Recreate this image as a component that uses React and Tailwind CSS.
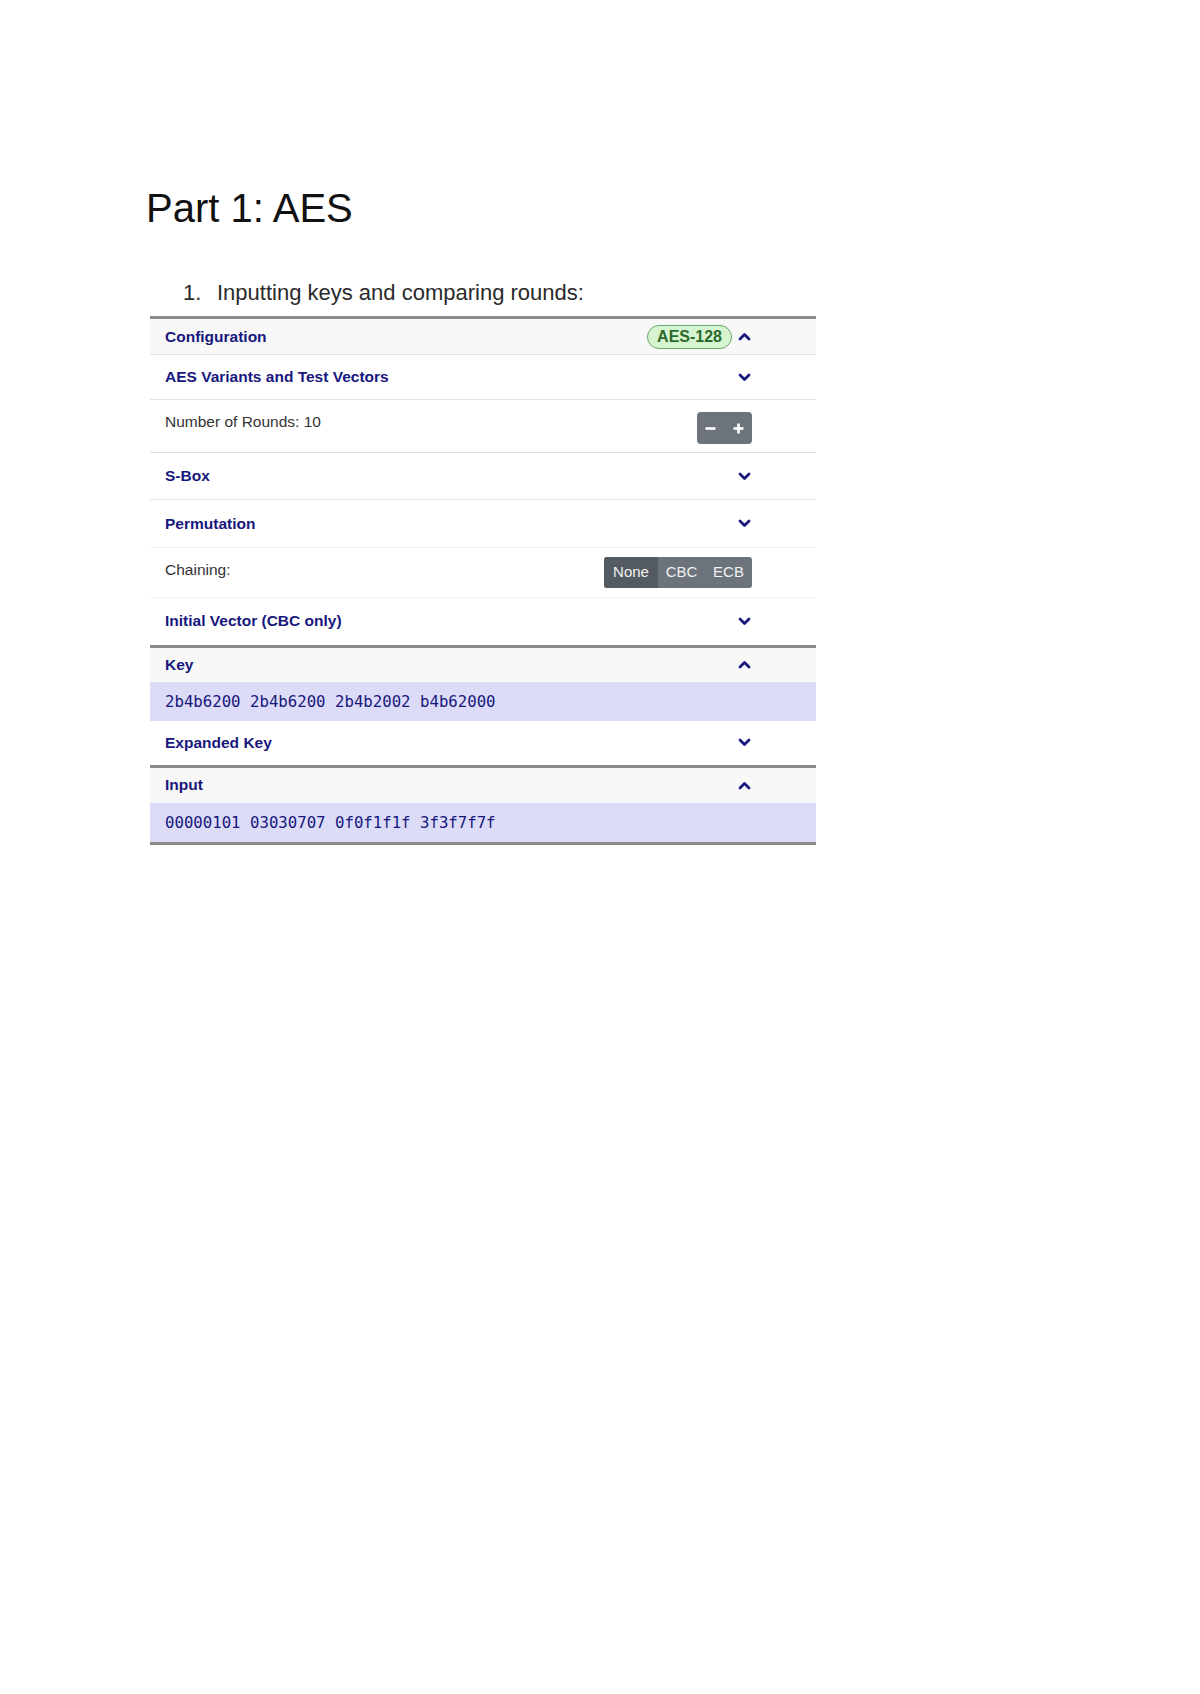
const navy = 'text-[#17177c]';

function Chevron({ up }) {
  return (
    <svg width="13" height="9" viewBox="0 0 13 9" className="shrink-0">
      <polyline
        points={up ? '2,7 6.5,2.5 11,7' : '2,2 6.5,6.5 11,2'}
        fill="none"
        stroke="#17177c"
        strokeWidth="2.8"
        strokeLinecap="round"
        strokeLinejoin="round"
      />
    </svg>
  );
}

function HeadRow({ title, h, up, shade, border = 'border-[#e4e4e4]', children }) {
  return (
    <div
      className={`flex items-center justify-between pl-[15px] pr-[65px] border-b ${border} ${h} ${shade ? 'bg-[#f8f8f8]' : 'bg-white'}`}
    >
      <span className={`font-bold text-[15.5px] leading-5 ${navy}`}>{title}</span>
      <div className="flex items-center gap-[6px]">
        {children}
        <Chevron up={up} />
      </div>
    </div>
  );
}

function ValueRow({ value }) {
  return (
    <div className="flex items-center h-[39px] pl-[15px] bg-[#dcdcf8]">
      <span
        className={`text-[15.7px] leading-5 ${navy}`}
        style={{ fontFamily: '"DejaVu Sans Mono", "Liberation Mono", monospace' }}
      >
        {value}
      </span>
    </div>
  );
}

export default function App() {
  return (
    <div
      className="min-h-[1694px] w-[1200px] bg-white pt-[188px]"
      style={{ fontFamily: '"Liberation Sans", Arial, sans-serif' }}
    >
      <h1 className="ml-[146px] text-[40px] leading-[40px] text-[#111] font-normal">Part 1: AES</h1>

      <div className="mt-[52px] ml-[183px] flex text-[22px] leading-[26px] text-[#2a2a2a]">
        <span className="w-[34px]">1.</span>
        <span>Inputting keys and comparing rounds:</span>
      </div>

      <div className="mt-[10px] ml-[150px] w-[666px] border-t-[3px] border-[#8a8a8a]">
        <HeadRow title="Configuration" h="h-[36px]" up shade>
          <span className="rounded-full border-[1.5px] border-[#6aa56a] bg-[#d7f4d0] px-[9px] h-[24px] flex items-center text-[16px] font-bold text-[#2c6a2c]">
            AES-128
          </span>
        </HeadRow>
        <HeadRow title="AES Variants and Test Vectors" h="h-[45px]" />

        <div className="flex items-start justify-between pl-[15px] pr-[64px] pt-[12px] h-[53px] border-b border-[#dedede]">
          <span className="text-[15.5px] leading-5 text-[#333]">Number of Rounds: 10</span>
          <div className="flex items-center gap-[17px] h-[32px] px-[8px] rounded-[4px] bg-[#6c737b]">
            <svg width="11" height="11" viewBox="0 0 11 11">
              <line x1="0.5" y1="5.5" x2="10.5" y2="5.5" stroke="#fff" strokeWidth="2.6" />
            </svg>
            <svg width="11" height="11" viewBox="0 0 11 11">
              <line x1="0.5" y1="5.5" x2="10.5" y2="5.5" stroke="#fff" strokeWidth="2.6" />
              <line x1="5.5" y1="0.5" x2="5.5" y2="10.5" stroke="#fff" strokeWidth="2.6" />
            </svg>
          </div>
        </div>

        <HeadRow title="S-Box" h="h-[47px]" />
        <HeadRow title="Permutation" h="h-[48px]" border="border-[#f1f1f1]" />

        <div className="flex items-center justify-between pl-[15px] pr-[64px] h-[50px] border-b border-[#f1f1f1]">
          <span className="text-[15.5px] leading-5 text-[#333] -mt-[6px]">Chaining:</span>
          <div className="flex h-[31px] rounded-[3px] overflow-hidden bg-[#6c737b] text-[15px] text-[#f2f2f2]">
            <span className="w-[54px] flex items-center justify-center bg-[#545a61]">None</span>
            <span className="w-[47px] flex items-center justify-center">CBC</span>
            <span className="w-[47px] flex items-center justify-center">ECB</span>
          </div>
        </div>

        <HeadRow title="Initial Vector (CBC only)" h="h-[47px]" border="border-transparent" />

        <div className="border-t-[3px] border-[#8a8a8a]">
          <HeadRow title="Key" h="h-[34px]" up shade border="border-transparent" />
          <ValueRow value="2b4b6200 2b4b6200 2b4b2002 b4b62000" />
          <HeadRow title="Expanded Key" h="h-[44px]" border="border-transparent" />
        </div>

        <div className="border-t-[3px] border-b-[3px] border-[#8a8a8a]">
          <HeadRow title="Input" h="h-[35px]" up shade border="border-transparent" />
          <ValueRow value="00000101 03030707 0f0f1f1f 3f3f7f7f" />
        </div>
      </div>
    </div>
  );
}
